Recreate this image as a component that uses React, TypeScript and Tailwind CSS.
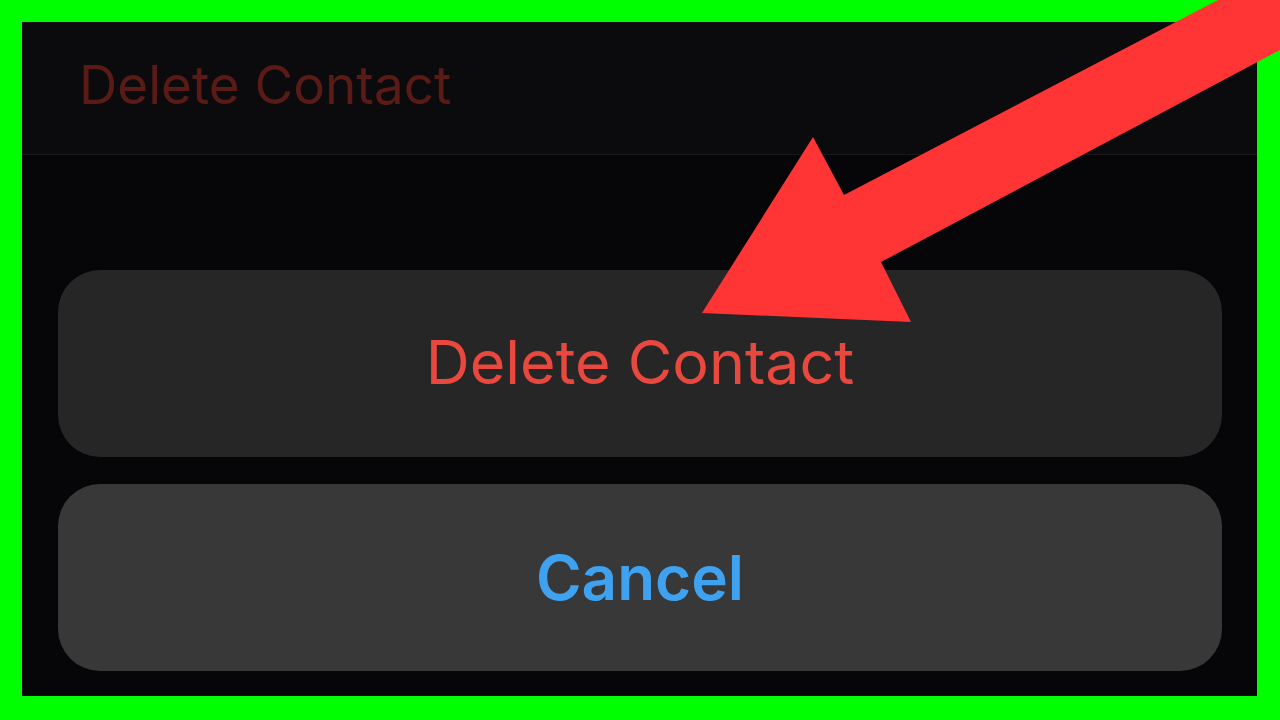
import React from 'react';

// Red pointer arrow drawn over the action sheet
function PointerArrow() {
  return (
    <svg
      className="absolute left-0 top-0 pointer-events-none"
      width={1280}
      height={720}
      viewBox="0 0 1280 720"
    >
      <polygon
        fill="#ff3535"
        points="1218,0 1280,0 1280,50 881,262 911,322 702,313 813,137 844,195"
      />
    </svg>
  );
}

export default function App() {
  return (
    <div
      className="relative w-[1280px] h-[720px] bg-[#00ff00] pt-[22px] pl-[22px] pr-[23px] pb-[24px]"
      style={{ fontFamily: 'Inter, "Noto Sans", sans-serif' }}
    >
      <div className="flex flex-col h-full bg-[#060608]">
        {/* dimmed list row behind the sheet */}
        <div className="h-[133px] bg-[#0b0b0d] border-b border-[#19191b] flex items-center pl-[57px]">
          <span className="text-[53px] leading-none text-[#5a1b17] -mt-[6px]">Delete Contact</span>
        </div>

        <div className="flex flex-col gap-[27px] px-[36px] pr-[35px] mt-[115px]">
          <button className="h-[187px] rounded-[42px] bg-[#262626] flex items-center justify-center">
            <span className="text-[61px] leading-none text-[#e9483e] -mt-[3px]">Delete Contact</span>
          </button>
          <button className="h-[187px] rounded-[42px] bg-[#383838] flex items-center justify-center">
            <span className="text-[62px] leading-none font-semibold text-[#3fa2f0]">Cancel</span>
          </button>
        </div>
      </div>
      <PointerArrow />
    </div>
  );
}
